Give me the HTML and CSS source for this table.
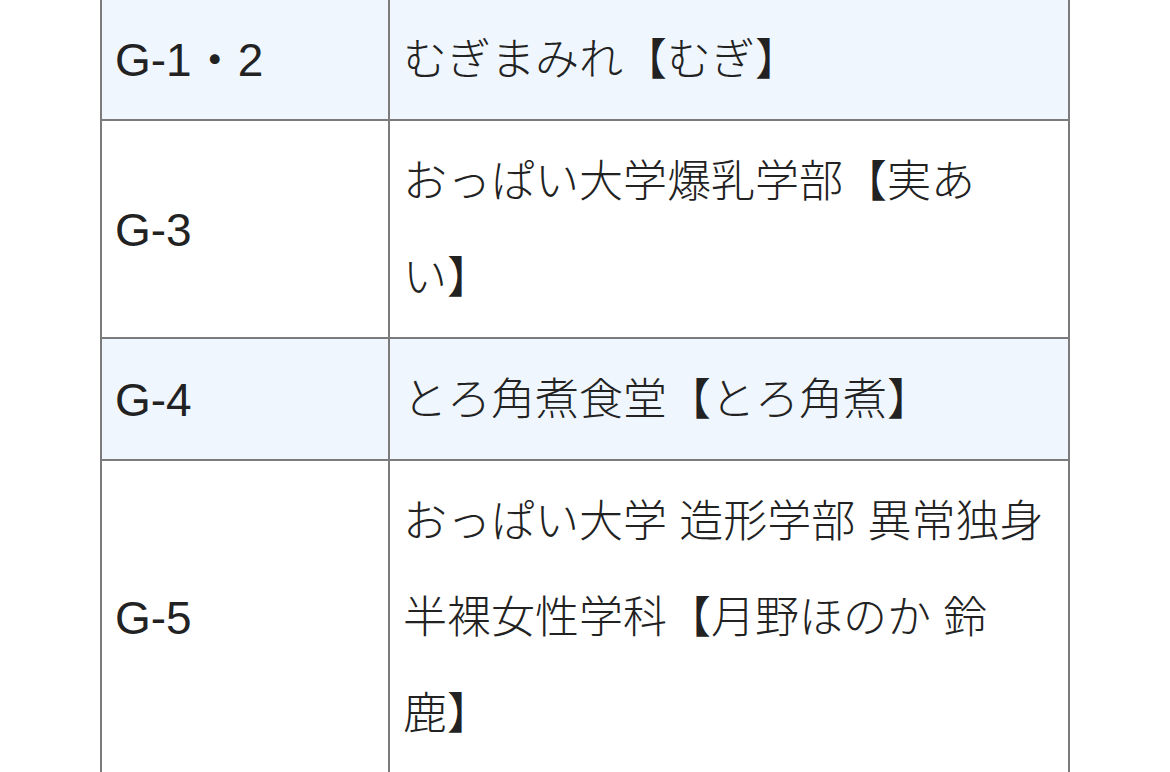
FILE: index.html
```html
<!DOCTYPE html>
<html lang="ja">
<head>
<meta charset="utf-8">
<link rel="stylesheet" href="styles.css">
</head>
<body>
<div class="page">
  <table class="booths">
    <colgroup>
      <col class="col-code">
      <col class="col-name">
    </colgroup>
    <tbody>
      <tr class="shaded">
        <td class="code">G-1・2</td>
        <td class="name">むぎまみれ【むぎ】</td>
      </tr>
      <tr>
        <td class="code">G-3</td>
        <td class="name">おっぱい大学爆乳学部【実あい】</td>
      </tr>
      <tr class="shaded">
        <td class="code">G-4</td>
        <td class="name">とろ角煮食堂【とろ角煮】</td>
      </tr>
      <tr>
        <td class="code">G-5</td>
        <td class="name">おっぱい大学 造形学部 異常独身半裸女性学科【月野ほのか 鈴鹿】</td>
      </tr>
    </tbody>
  </table>
</div>
</body>
</html>
```

FILE: styles.css
```css
html, body {
  margin: 0;
  padding: 0;
  background: #ffffff;
}

.page {
  padding: 0 100px 0 100px;
  margin-top: -3px;
  font-family: "Liberation Sans", "Noto Sans CJK JP", sans-serif;
  color: #222222;
}

.booths {
  width: 968px;
  border-collapse: collapse;
  table-layout: fixed;
}

.col-code {
  width: 288px;
}

.col-name {
  width: 680px;
}

.booths td {
  border: 2px solid #7b7b7b;
  padding: 13px 13px 11px 13px;
  line-height: 96px;
  vertical-align: middle;
}

.booths tr.shaded td {
  background: #eff6fd;
}

.code {
  white-space: nowrap;
  font-size: 46px;
}

.name {
  font-size: 44px;
  font-weight: 300;
  padding-left: 13px;
  padding-right: 20px;
  line-break: strict;
  text-spacing-trim: space-all;
}
```
